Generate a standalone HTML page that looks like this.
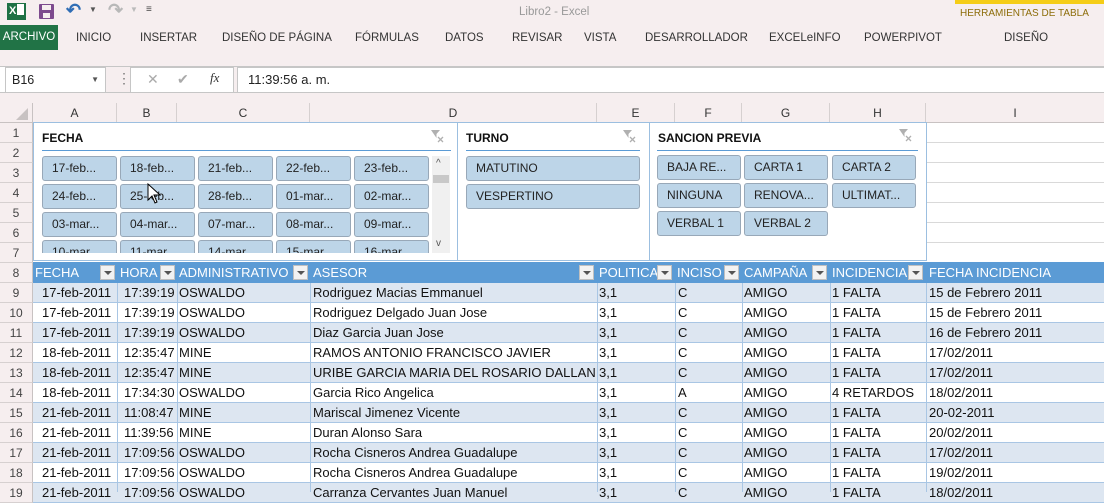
<!DOCTYPE html>
<html><head><meta charset="utf-8"><style>
*{margin:0;padding:0;box-sizing:border-box}
body{width:1104px;height:492px;overflow:hidden;background:#f6eeef;font-family:"Liberation Sans",sans-serif;position:relative;color:#222}
.a{position:absolute;white-space:nowrap}
.tab{position:absolute;top:32px;font-size:11.5px;color:#333}
.ch{position:absolute;top:103px;height:20px;font-size:12px;color:#333;text-align:center;line-height:20px;border-right:1px solid #d6d0d0}
.rh{position:absolute;left:0;width:33px;height:20px;font-size:12px;color:#444;text-align:center;line-height:20px;border-bottom:1px solid #d6d0d0;border-right:1px solid #c8c2c2}
.sl{position:absolute;background:#fff;border:1px solid #9cbfe0}
.st{position:absolute;top:8px;left:8px;font-weight:bold;font-size:12px;color:#111}
.sline{position:absolute;top:27px;height:1px;background:#5b9bd5}
.b{position:absolute;height:25px;background:#bdd5e8;border:1px solid #98a8b8;border-radius:3px;font-size:12px;line-height:23px;padding-left:9px;color:#222;overflow:hidden}
.row{position:absolute;left:33px;width:1071px;height:20px;font-size:13px;line-height:20px;border-bottom:1px solid #a9c6e4;color:#111}
.row span{position:absolute}
.bd{background:#dde6f1}
.wh{background:#fff}
.hd{position:absolute;top:262px;left:33px;width:1071px;height:21px;background:#5b9bd5;color:#fff;font-size:13px;line-height:21px}
.hd span{position:absolute}
.dd{position:absolute;top:3px;width:15px;height:15px;background:#f2f2f2;border:1px solid #c0c0c0}
.dd:after{content:"";position:absolute;left:3px;top:5px;border-left:4px solid transparent;border-right:4px solid transparent;border-top:4px solid #555}
.fi{position:absolute;width:14px;height:14px}
</style></head><body>
<div class="a" style="left:7px;top:3px;width:19px;height:17px;background:#1e7145;color:#fff;font-size:11px;font-weight:bold;line-height:17px;padding-left:2px">X<span style="display:inline-block;width:7px;height:11px;background:#fff;margin-left:1px;vertical-align:-1px"></span></div>
<div class="a" style="left:39px;top:4px;width:15px;height:15px;background:#7d4a8e;border-radius:1px"><div style="position:absolute;left:3px;top:1px;width:9px;height:5px;background:#f6eeef"></div><div style="position:absolute;left:4px;top:9px;width:7px;height:5px;background:#f6eeef"></div></div>
<div class="a" style="left:66px;top:0px;font-size:18px;color:#2f6db5;font-weight:bold">↶</div>
<div class="a" style="left:89px;top:5px;font-size:8px;color:#555">▼</div>
<div class="a" style="left:108px;top:0px;font-size:18px;color:#b8b8b8;font-weight:bold">↷</div>
<div class="a" style="left:130px;top:5px;font-size:8px;color:#bbb">▼</div>
<div class="a" style="left:146px;top:4px;font-size:10px;color:#444">≡</div>
<div class="a" style="left:519px;top:6px;font-size:11.5px;color:#999">Libro2 - Excel</div>
<div class="a" style="left:955px;top:0;width:149px;height:4px;background:#f5cd17"></div>
<div class="a" style="left:960px;top:8px;font-size:10px;color:#8d6d0a">HERRAMIENTAS DE TABLA</div>
<div class="a" style="left:0;top:25px;width:58px;height:25px;background:#217346;color:#fff;font-size:11.5px;line-height:25px;text-align:center">ARCHIVO</div>
<div class="tab" style="left:76px">INICIO</div>
<div class="tab" style="left:140px">INSERTAR</div>
<div class="tab" style="left:222px">DISEÑO DE PÁGINA</div>
<div class="tab" style="left:355px">FÓRMULAS</div>
<div class="tab" style="left:445px">DATOS</div>
<div class="tab" style="left:512px">REVISAR</div>
<div class="tab" style="left:584px">VISTA</div>
<div class="tab" style="left:645px">DESARROLLADOR</div>
<div class="tab" style="left:769px">EXCELeINFO</div>
<div class="tab" style="left:864px">POWERPIVOT</div>
<div class="tab" style="left:1004px">DISEÑO</div>
<div class="a" style="left:0;top:66px;width:1104px;height:1px;background:#c6c6c6"></div>
<div class="a" style="left:0;top:67px;width:1104px;height:25px;background:#fff"></div>
<div class="a" style="left:5px;top:67px;width:101px;height:26px;background:#fff;border:1px solid #c6c6c6;font-size:12.5px;line-height:24px;padding-left:6px">B16<span style="position:absolute;right:6px;top:0;font-size:8px;color:#555">▼</span></div>
<div class="a" style="left:106px;top:67px;width:24px;height:26px;background:#f6eeef"></div>
<div class="a" style="left:117px;top:70px;font-size:14px;color:#777">⋮</div>
<div class="a" style="left:130px;top:67px;width:104px;height:26px;background:#fff;border:1px solid #c6c6c6"></div>
<div class="a" style="left:147px;top:71px;font-size:14px;color:#aaa">✕</div>
<div class="a" style="left:177px;top:71px;font-size:14px;color:#aaa">✔</div>
<div class="a" style="left:210px;top:70px;font-size:13px;color:#333;font-family:'Liberation Serif',serif;font-style:italic">fx</div>
<div class="a" style="left:234px;top:67px;width:14px;height:26px;background:#f6eeef"></div>
<div class="a" style="left:237px;top:67px;width:867px;height:26px;background:#fff;border:1px solid #c6c6c6;border-right:none;font-size:13px;line-height:24px;padding-left:10px">11:39:56 a. m.</div>
<div class="a" style="left:0;top:92px;width:1104px;height:1px;background:#c6c6c6"></div>
<div class="a" style="left:0;top:103px;width:33px;height:20px;border-right:1px solid #c8c2c2"><div style="position:absolute;right:4px;bottom:3px;border-left:12px solid transparent;border-bottom:12px solid #c8c2c2"></div></div>
<div class="ch" style="left:33px;width:84px">A</div>
<div class="ch" style="left:117px;width:60px">B</div>
<div class="ch" style="left:177px;width:133px">C</div>
<div class="ch" style="left:310px;width:287px">D</div>
<div class="ch" style="left:597px;width:78px">E</div>
<div class="ch" style="left:675px;width:67px">F</div>
<div class="ch" style="left:742px;width:88px">G</div>
<div class="ch" style="left:830px;width:96px">H</div>
<div class="ch" style="left:926px;width:178px;border:none">I</div>
<div class="a" style="left:0;top:122px;width:1104px;height:1px;background:#c8c2c2"></div>
<div class="rh" style="top:123px">1</div><div class="rh" style="top:143px">2</div><div class="rh" style="top:163px">3</div><div class="rh" style="top:183px">4</div><div class="rh" style="top:203px">5</div><div class="rh" style="top:223px">6</div><div class="rh" style="top:243px">7</div><div class="rh" style="top:263px">8</div><div class="rh" style="top:283px">9</div><div class="rh" style="top:303px">10</div><div class="rh" style="top:323px">11</div><div class="rh" style="top:343px">12</div><div class="rh" style="top:363px">13</div><div class="rh" style="top:383px">14</div><div class="rh" style="top:403px">15</div><div class="rh" style="top:423px">16</div><div class="rh" style="top:443px">17</div><div class="rh" style="top:463px">18</div><div class="rh" style="top:483px">19</div>
<div class="a" style="left:33px;top:123px;width:1071px;height:140px;background:#fff;background-image:repeating-linear-gradient(to bottom,transparent 0 19px,#d9d9d9 19px 20px)"></div>
<div class="sl" style="left:33px;top:122px;width:425px;height:139px">
 <div class="st">FECHA</div>
 <svg class="fi" style="left:396px;top:6px" viewBox="0 0 14 14"><path d="M1 1h9L6.5 5v4" fill="#b0b0b0"/><path d="M8 8l5 5M13 8l-5 5" stroke="#b0b0b0" stroke-width="1.3"/></svg>
 <div class="sline" style="left:8px;width:409px"></div>
 <div class="b" style="left:8px;top:33px;width:75px">17-feb...</div><div class="b" style="left:86px;top:33px;width:75px">18-feb...</div><div class="b" style="left:164px;top:33px;width:75px">21-feb...</div><div class="b" style="left:242px;top:33px;width:75px">22-feb...</div><div class="b" style="left:320px;top:33px;width:75px">23-feb...</div>
 <div class="b" style="left:8px;top:61px;width:75px">24-feb...</div><div class="b" style="left:86px;top:61px;width:75px">25-feb...</div><div class="b" style="left:164px;top:61px;width:75px">28-feb...</div><div class="b" style="left:242px;top:61px;width:75px">01-mar...</div><div class="b" style="left:320px;top:61px;width:75px">02-mar...</div>
 <div class="b" style="left:8px;top:89px;width:75px">03-mar...</div><div class="b" style="left:86px;top:89px;width:75px">04-mar...</div><div class="b" style="left:164px;top:89px;width:75px">07-mar...</div><div class="b" style="left:242px;top:89px;width:75px">08-mar...</div><div class="b" style="left:320px;top:89px;width:75px">09-mar...</div>
 <div style="position:absolute;left:0;top:117px;width:400px;height:13px;overflow:hidden">
 <div class="b" style="left:8px;top:0;width:75px">10-mar...</div><div class="b" style="left:86px;top:0;width:75px">11-mar...</div><div class="b" style="left:164px;top:0;width:75px">14-mar...</div><div class="b" style="left:242px;top:0;width:75px">15-mar...</div><div class="b" style="left:320px;top:0;width:75px">16-mar...</div></div>
 <div style="position:absolute;left:398px;top:33px;width:18px;height:97px;background:#f0f0f0"><div style="position:absolute;left:1px;top:19px;width:16px;height:8px;background:#c8c8c8"></div><div style="position:absolute;left:4px;top:2px;font-size:10px;color:#555">^</div><div style="position:absolute;left:4px;top:82px;font-size:10px;color:#555">v</div></div>
</div>
<svg class="a" style="left:147px;top:183px" width="14" height="22" viewBox="0 0 14 22"><path d="M1 1v16l4-4 3 7 2-1-3-7h6z" fill="#fff" stroke="#000" stroke-width="1"/></svg>
<div class="sl" style="left:457px;top:122px;width:193px;height:139px">
 <div class="st">TURNO</div>
 <svg class="fi" style="left:164px;top:6px" viewBox="0 0 14 14"><path d="M1 1h9L6.5 5v4" fill="#b0b0b0"/><path d="M8 8l5 5M13 8l-5 5" stroke="#b0b0b0" stroke-width="1.3"/></svg>
 <div class="sline" style="left:8px;width:174px"></div>
 <div class="b" style="left:8px;top:33px;width:174px">MATUTINO</div>
 <div class="b" style="left:8px;top:61px;width:174px">VESPERTINO</div>
</div>
<div class="sl" style="left:649px;top:122px;width:278px;height:139px">
 <div class="st">SANCION PREVIA</div>
 <svg class="fi" style="left:248px;top:5px" viewBox="0 0 14 14"><path d="M1 1h9L6.5 5v4" fill="#b0b0b0"/><path d="M8 8l5 5M13 8l-5 5" stroke="#b0b0b0" stroke-width="1.3"/></svg>
 <div class="sline" style="left:7px;width:261px"></div>
 <div class="b" style="left:7px;top:32px;width:84px">BAJA RE...</div><div class="b" style="left:94px;top:32px;width:84px">CARTA 1</div><div class="b" style="left:182px;top:32px;width:84px">CARTA 2</div>
 <div class="b" style="left:7px;top:60px;width:84px">NINGUNA</div><div class="b" style="left:94px;top:60px;width:84px">RENOVA...</div><div class="b" style="left:182px;top:60px;width:84px">ULTIMAT...</div>
 <div class="b" style="left:7px;top:88px;width:84px">VERBAL 1</div><div class="b" style="left:94px;top:88px;width:84px">VERBAL 2</div>
</div>
<div class="hd">
 <span style="left:2px">FECHA</span><div class="dd" style="left:67px"></div>
 <span style="left:87px">HORA</span><div class="dd" style="left:127px"></div>
 <span style="left:146px">ADMINISTRATIVO</span><div class="dd" style="left:260px"></div>
 <span style="left:280px">ASESOR</span><div class="dd" style="left:546px"></div>
 <span style="left:566px">POLITICA</span><div class="dd" style="left:624px"></div>
 <span style="left:644px">INCISO</span><div class="dd" style="left:691px"></div>
 <span style="left:711px">CAMPAÑA</span><div class="dd" style="left:779px"></div>
 <span style="left:799px">INCIDENCIA</span><div class="dd" style="left:875px"></div>
 <span style="left:896px">FECHA INCIDENCIA</span>
</div>
<div class="row bd" style="top:283px"><span style="left:9px">17-feb-2011</span><span style="left:91px">17:39:19</span><span style="left:146px">OSWALDO</span><span style="left:280px">Rodriguez Macias Emmanuel</span><span style="left:566px">3,1</span><span style="left:645px">C</span><span style="left:711px">AMIGO</span><span style="left:799px">1 FALTA</span><span style="left:896px">15 de Febrero 2011</span></div>
<div class="row wh" style="top:303px"><span style="left:9px">17-feb-2011</span><span style="left:91px">17:39:19</span><span style="left:146px">OSWALDO</span><span style="left:280px">Rodriguez Delgado Juan Jose</span><span style="left:566px">3,1</span><span style="left:645px">C</span><span style="left:711px">AMIGO</span><span style="left:799px">1 FALTA</span><span style="left:896px">15 de Febrero 2011</span></div>
<div class="row bd" style="top:323px"><span style="left:9px">17-feb-2011</span><span style="left:91px">17:39:19</span><span style="left:146px">OSWALDO</span><span style="left:280px">Diaz Garcia Juan Jose</span><span style="left:566px">3,1</span><span style="left:645px">C</span><span style="left:711px">AMIGO</span><span style="left:799px">1 FALTA</span><span style="left:896px">16 de Febrero 2011</span></div>
<div class="row wh" style="top:343px"><span style="left:9px">18-feb-2011</span><span style="left:91px">12:35:47</span><span style="left:146px">MINE</span><span style="left:280px">RAMOS ANTONIO FRANCISCO JAVIER</span><span style="left:566px">3,1</span><span style="left:645px">C</span><span style="left:711px">AMIGO</span><span style="left:799px">1 FALTA</span><span style="left:896px">17/02/2011</span></div>
<div class="row bd" style="top:363px"><span style="left:9px">18-feb-2011</span><span style="left:91px">12:35:47</span><span style="left:146px">MINE</span><span style="left:280px">URIBE GARCIA MARIA DEL ROSARIO DALLAN</span><span style="left:566px">3,1</span><span style="left:645px">C</span><span style="left:711px">AMIGO</span><span style="left:799px">1 FALTA</span><span style="left:896px">17/02/2011</span></div>
<div class="row wh" style="top:383px"><span style="left:9px">18-feb-2011</span><span style="left:91px">17:34:30</span><span style="left:146px">OSWALDO</span><span style="left:280px">Garcia Rico Angelica</span><span style="left:566px">3,1</span><span style="left:645px">A</span><span style="left:711px">AMIGO</span><span style="left:799px">4 RETARDOS</span><span style="left:896px">18/02/2011</span></div>
<div class="row bd" style="top:403px"><span style="left:9px">21-feb-2011</span><span style="left:91px">11:08:47</span><span style="left:146px">MINE</span><span style="left:280px">Mariscal Jimenez Vicente</span><span style="left:566px">3,1</span><span style="left:645px">C</span><span style="left:711px">AMIGO</span><span style="left:799px">1 FALTA</span><span style="left:896px">20-02-2011</span></div>
<div class="row wh" style="top:423px"><span style="left:9px">21-feb-2011</span><span style="left:91px">11:39:56</span><span style="left:146px">MINE</span><span style="left:280px">Duran Alonso Sara</span><span style="left:566px">3,1</span><span style="left:645px">C</span><span style="left:711px">AMIGO</span><span style="left:799px">1 FALTA</span><span style="left:896px">20/02/2011</span></div>
<div class="row bd" style="top:443px"><span style="left:9px">21-feb-2011</span><span style="left:91px">17:09:56</span><span style="left:146px">OSWALDO</span><span style="left:280px">Rocha Cisneros Andrea Guadalupe</span><span style="left:566px">3,1</span><span style="left:645px">C</span><span style="left:711px">AMIGO</span><span style="left:799px">1 FALTA</span><span style="left:896px">17/02/2011</span></div>
<div class="row wh" style="top:463px"><span style="left:9px">21-feb-2011</span><span style="left:91px">17:09:56</span><span style="left:146px">OSWALDO</span><span style="left:280px">Rocha Cisneros Andrea Guadalupe</span><span style="left:566px">3,1</span><span style="left:645px">C</span><span style="left:711px">AMIGO</span><span style="left:799px">1 FALTA</span><span style="left:896px">19/02/2011</span></div>
<div class="row bd" style="top:483px"><span style="left:9px">21-feb-2011</span><span style="left:91px">17:09:56</span><span style="left:146px">OSWALDO</span><span style="left:280px">Carranza Cervantes Juan Manuel</span><span style="left:566px">3,1</span><span style="left:645px">C</span><span style="left:711px">AMIGO</span><span style="left:799px">1 FALTA</span><span style="left:896px">18/02/2011</span></div>
<div class="a" style="left:117px;top:283px;width:1px;height:209px;background:#a9c6e4"></div>
<div class="a" style="left:177px;top:283px;width:1px;height:209px;background:#a9c6e4"></div>
<div class="a" style="left:310px;top:283px;width:1px;height:209px;background:#a9c6e4"></div>
<div class="a" style="left:597px;top:283px;width:1px;height:209px;background:#a9c6e4"></div>
<div class="a" style="left:675px;top:283px;width:1px;height:209px;background:#a9c6e4"></div>
<div class="a" style="left:742px;top:283px;width:1px;height:209px;background:#a9c6e4"></div>
<div class="a" style="left:830px;top:283px;width:1px;height:209px;background:#a9c6e4"></div>
<div class="a" style="left:926px;top:283px;width:1px;height:209px;background:#a9c6e4"></div>
</body></html>
